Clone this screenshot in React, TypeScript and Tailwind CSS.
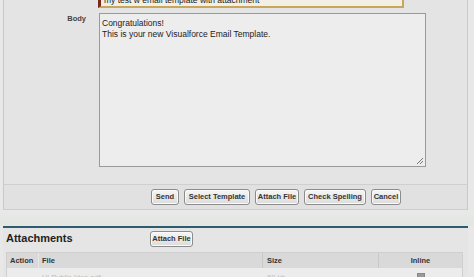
import React from "react";

const Btn = ({ children, w }: { children: React.ReactNode; w: string }) => (
  <div
    className={`${w} h-[16px] flex items-center justify-center whitespace-nowrap rounded-[3px] border border-[#8c8c8c] bg-gradient-to-b from-[#f6f6f6] to-[#dcdcdc] text-[7.5px] font-bold text-[#333] leading-none shadow-[inset_0_0_0_1px_#fafafa]`}
  >
    {children}
  </div>
);

export default function App() {
  return (
    <div
      className="w-[474px] h-[277px] overflow-hidden bg-[#e7e8e7] text-[#222]"
      style={{ fontFamily: '"Liberation Sans", Arial, sans-serif' }}
    >
      {/* main edit panel */}
      <div className="ml-[3px] w-[465px] border-l border-r border-[#c9c9c9] bg-[#e4e4e4]">
        {/* subject row */}
        <div className="h-[13px] flex">
          <div className="w-[94px]" />
          <div className="mt-[-12px] h-[20px] w-[306px] border-[2px] border-[#c8a75c] border-l-[3px] border-l-[#7a2a1a] bg-[#f3efe4] flex items-end pb-[2px] pl-[3px] text-[8.5px] leading-none text-[#222]">
            my test w email template with attachment
          </div>
        </div>
        {/* body row */}
        <div className="flex h-[171px]">
          <div className="w-[82px] pt-[2px] text-right text-[7.5px] font-bold text-[#444] leading-none">Body</div>
          <div className="ml-[13px] relative w-[327px] h-[154px] border border-[#9a9a9a] bg-[#ededed] pl-[2px] pt-[4px] text-[8.5px] leading-[11px] text-[#222]">
            <div>Congratulations!</div>
            <div>This is your new Visualforce Email Template.</div>
            <svg className="absolute right-[1px] bottom-[1px]" width="8" height="8" viewBox="0 0 8 8">
              <path d="M7 1 L1 7 M7 4 L4 7" stroke="#777" strokeWidth="1" />
            </svg>
          </div>
        </div>
        {/* button bar */}
        <div className="border-t border-[#cfcfcf] border-b border-b-[#cdcdcd] h-[26px] bg-[#e1e1e1] flex items-center pl-[147px] gap-[5px]">
          <Btn w="w-[28px]">Send</Btn>
          <Btn w="w-[66px]">Select Template</Btn>
          <Btn w="w-[44px]">Attach File</Btn>
          <Btn w="w-[62px]">Check Spelling</Btn>
          <Btn w="w-[30px]">Cancel</Btn>
        </div>
      </div>
      {/* gap */}
      <div className="h-[16px] bg-gradient-to-b from-[#e8e9e8] to-[#e3e6e3]" />
      {/* attachments */}
      <div className="ml-[3px] w-[465px] border-t-[2px] border-[#2e5b6e] bg-[#e5e5e5] h-[60px]">
        <div className="flex items-center h-[21px] pl-[3px]">
          <div className="w-[144px] text-[11px] font-bold text-[#222] leading-none">Attachments</div>
          <Btn w="w-[43px]">Attach File</Btn>
        </div>
        <div className="mt-[3px] ml-[3px] w-[457px] border border-[#cfcfcf]">
          <div className="flex h-[15px] bg-[#d9d9d9] text-[7.5px] font-bold text-[#333] leading-none items-stretch">
            <div className="w-[32px] flex items-center pl-[3px] border-r border-[#e8e8e8]">Action</div>
            <div className="w-[224px] flex items-center pl-[3px] border-r border-[#c8c8c8]">File</div>
            <div className="w-[116px] flex items-center pl-[4px] border-r border-[#c8c8c8]">Size</div>
            <div className="flex-1 flex items-center justify-center">Inline</div>
          </div>
          <div className="flex h-[14px] bg-[#ececec] text-[7.5px] text-[#bbb] leading-none items-end pb-[1px]">
            <div className="w-[32px]" />
            <div className="w-[224px] pl-[3px]">Hi Public Idea.pdf</div>
            <div className="w-[116px] pl-[4px]">69 kb</div>
            <div className="flex-1 flex justify-center">
              <div className="w-[8px] h-[8px] border border-[#888] bg-[#999]" />
            </div>
          </div>
        </div>
      </div>
    </div>
  );
}
